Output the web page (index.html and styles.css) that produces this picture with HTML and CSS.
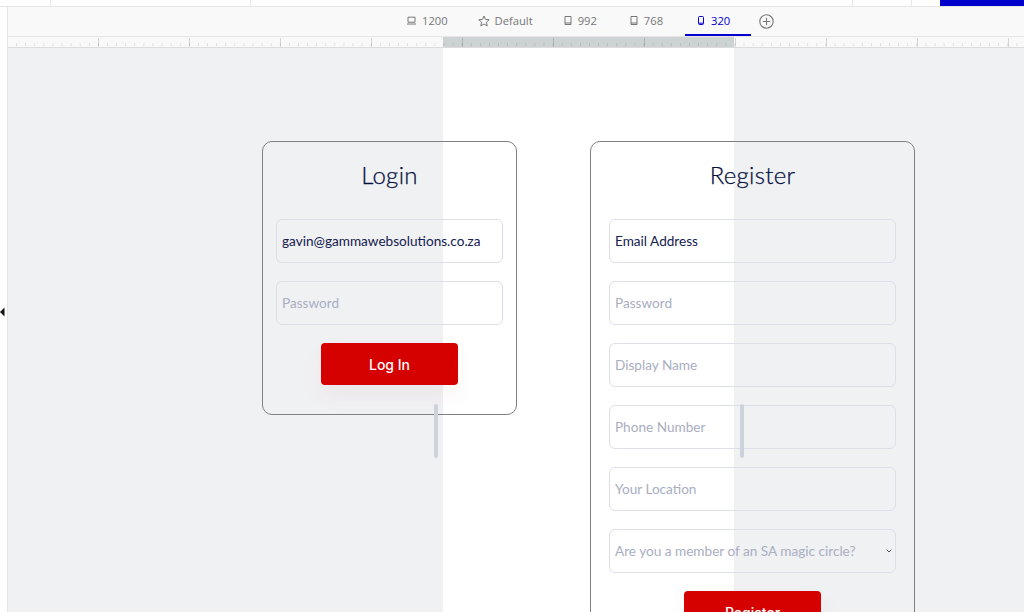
FILE: index.html
```html
<!DOCTYPE html>
<html lang="en">
<head>
<meta charset="utf-8">
<title>Login and Register</title>
<link rel="stylesheet" href="styles.css">
</head>
<body>
<div class="page">
  <div class="topstrip">
    <div class="cell cell-a"></div>
    <div class="cell cell-b"></div>
    <div class="cell cell-c"></div>
    <div class="cell cell-d"></div>
    <div class="cell cell-e"></div>
    <div class="topblue"></div>
  </div>
  <div class="shell">
    <div class="rail">
      <svg class="rail-arrow" width="5" height="10" viewBox="0 0 5 10"><path d="M4.5 0.5V9.5L0 5Z" fill="#111"/></svg>
    </div>
    <div class="main">
      <div class="toolbar">
        <div class="tab tab-wide">
          <svg class="ico" width="9" height="9" viewBox="0 0 9 9"><path d="M1 1.2H8V6.2H1ZM0 8H9" fill="none" stroke="#777" stroke-width="1"/></svg>
          <span>1200</span>
        </div>
        <div class="tab tab-default">
          <svg class="ico" width="12" height="12" viewBox="0 0 12 12"><path d="M6 1L7.5 4.4L11.2 4.8L8.4 7.2L9.2 10.9L6 9L2.8 10.9L3.6 7.2L.8 4.8L4.5 4.4Z" fill="none" stroke="#777" stroke-width="1" stroke-linejoin="round"/></svg>
          <span>Default</span>
        </div>
        <div class="tab">
          <svg class="ico" width="8" height="9" viewBox="0 0 8 9"><path d="M1 .5H7V8.5H1ZM1 7H7" fill="none" stroke="#777" stroke-width="1"/></svg>
          <span>992</span>
        </div>
        <div class="tab tab-768">
          <svg class="ico" width="8" height="9" viewBox="0 0 8 9"><path d="M1 .5H7V8.5H1ZM1 7H7" fill="none" stroke="#777" stroke-width="1"/></svg>
          <span>768</span>
        </div>
        <div class="tab tab-active">
          <svg class="ico" width="6" height="9" viewBox="0 0 6 9"><rect x=".5" y=".5" width="5" height="8" rx="1" fill="none" stroke="#0000d0" stroke-width="1"/><path d="M1 7.2H5" stroke="#0000d0" stroke-width="1"/></svg>
          <span>320</span>
        </div>
        <svg class="add" width="15" height="15" viewBox="0 0 15 15"><circle cx="7.5" cy="7.5" r="6.7" fill="none" stroke="#777" stroke-width="1.1"/><path d="M7.5 3.8V11.2M3.8 7.5H11.2" stroke="#777" stroke-width="1.1"/></svg>
      </div>
      <div class="ruler"></div>
      <div class="canvas">
        <section class="card card-login">
          <h2 class="title">Login</h2>
          <form class="fields">
            <input class="field" type="text" value="gavin@gammawebsolutions.co.za">
            <input class="field" type="password" placeholder="Password">
            <button class="btn" type="button">Log In</button>
          </form>
        </section>
        <section class="card card-register">
          <h2 class="title">Register</h2>
          <form class="fields">
            <input class="field" type="text" value="Email Address">
            <input class="field" type="password" placeholder="Password">
            <input class="field" type="text" placeholder="Display Name">
            <input class="field" type="text" placeholder="Phone Number">
            <input class="field" type="text" placeholder="Your Location">
            <div class="select-wrap">
              <select class="field field-select">
                <option>Are you a member of an SA magic circle?</option>
              </select>
              <svg class="chevron" width="6" height="4" viewBox="0 0 6 4"><path d="M.7 .7L3 3L5.3 .7" fill="none" stroke="#555" stroke-width="1"/></svg>
            </div>
            <button class="btn" type="button">Register</button>
          </form>
        </section>
        <div class="scrollthumb thumb-a"></div>
        <div class="scrollthumb thumb-b"></div>
      </div>
    </div>
  </div>
</div>
</body>
</html>
```
FILE: styles.css
```css
* { box-sizing: border-box; }
html, body { margin: 0; height: 100%; overflow: hidden; background: #fff; }
.page { display: flex; flex-direction: column; height: 612px; overflow: hidden; }

.topstrip { display: flex; height: 7px; flex: none; border-bottom: 1px solid #e4e4e4; background: #fff; }
.cell { height: 6px; border-right: 1px solid #e8e8e8; flex: none; }
.cell-a { width: 51px; }
.cell-b { width: 200px; }
.cell-c { width: 602px; }
.cell-d { width: 59px; }
.cell-e { width: 28px; border-right: 0; }
.topblue { flex: 1; height: 6px; background: #0000cd; }

.shell { display: flex; flex: 1; min-height: 0; }
.rail { width: 7px; flex: none; position: relative; background: #fff; }
.rail-arrow { position: absolute; left: 0; top: 300px; }
.main { flex: 1; min-width: 0; display: flex; flex-direction: column; border-left: 1px solid #e4e4e4; }

.toolbar {
  flex: none; height: 30px; display: flex; align-items: stretch; padding-left: 386px;
  background: #f9f9f9; border-bottom: 1px solid #e6e6e6;
  font-family: "Open Sans", sans-serif; font-size: 11.2px; color: #777;
}
.tab { flex: none; display: flex; align-items: center; gap: 6px; padding: 0 20px 0 13px; border-bottom: 2px solid transparent; }
.tab-default { padding: 0 18px 0 10px; gap: 5px; }
.tab-768 { padding-right: 22px; }
.tab-active { color: #0000d0; border-bottom-color: #0000d0; gap: 7px; padding-right: 21px; }
.ico { flex: none; }
.add { align-self: center; margin-left: 8px; margin-bottom: 1px; }

.ruler {
  flex: none; height: 11px; border-bottom: 1px solid #dcdcdc;
  background-color: #f9f9f9;
  background-image:
    linear-gradient(to right, rgba(0,0,0,.14) 1px, transparent 1px),
    linear-gradient(to right, rgba(0,0,0,.11) 1px, transparent 1px),
    linear-gradient(to right, transparent 435px, #cdd2d2 435px, #cdd2d2 726px, transparent 726px);
  background-size: 91px 9px, 9.1px 3px, 100% 100%;
  background-position: 90px 1px, 8.1px 6px, 0 0;
  background-repeat: repeat-x, repeat-x, no-repeat;
}

.canvas {
  flex: 1; min-height: 0; position: relative; overflow: hidden;
  display: flex; align-items: flex-start; gap: 73px; padding: 93px 0 0 254px;
  background: linear-gradient(to right, #f0f1f3 435px, #fff 435px, #fff 726px, #f0f1f3 726px);
}

.card { flex: none; border: 1px solid #808080; border-radius: 10px; padding: 17px 13px 29px; }
.card-login { width: 255px; }
.card-register { width: 325px; padding-left: 18px; padding-right: 18px; }

.title {
  margin: 0 0 28px; text-align: center;
  font-family: Lato, sans-serif; font-weight: 300; font-size: 24px; letter-spacing: .3px; line-height: 32px; color: #04103f;
  -webkit-text-stroke: .25px #04103f;
}
.fields { display: flex; flex-direction: column; align-items: stretch; gap: 18px; }
.field {
  display: block; height: 44px; width: 100%; padding: 0 5px; margin: 0;
  border: 1px solid #dcdfe8; border-radius: 6px; background: transparent; outline: 0;
  font-family: Lato, sans-serif; font-size: 13.6px; color: #14204f;
}
.field::placeholder { color: #a9aec2; opacity: 1; }
.select-wrap { position: relative; }
.field-select { color: #a9aec2; appearance: none; -webkit-appearance: none; }
.chevron { position: absolute; right: 4px; top: 20px; }

.btn {
  align-self: center; width: 137px; height: 42px; border: 0; border-radius: 4px;
  background: #d50000; color: #fff;
  font-family: Inter, sans-serif; font-size: 14px; font-weight: 500;
  box-shadow: 0 10px 24px rgba(180, 0, 0, .05);
}

.scrollthumb { position: absolute; top: 356px; width: 4px; height: 54px; border-radius: 2px; background: #ccd3da; }
.thumb-a { left: 426px; }
.thumb-b { left: 732px; }
```
